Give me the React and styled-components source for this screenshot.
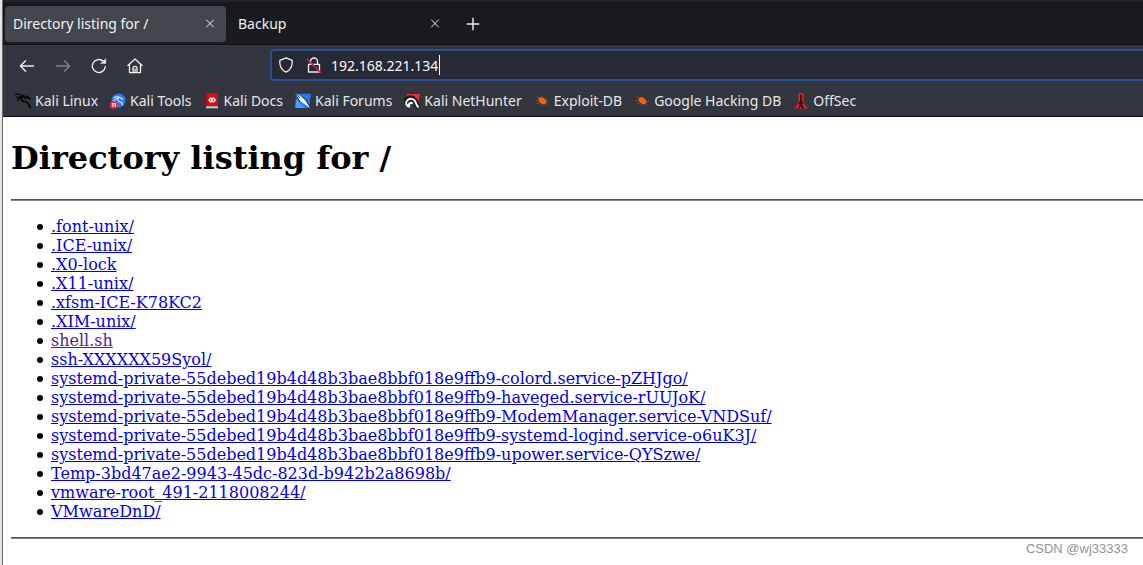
import React from 'react';
import styled, { createGlobalStyle } from 'styled-components';

const GlobalStyle = createGlobalStyle`
  * { box-sizing: border-box; }
  body { margin: 0; background: #fff; }
`;

const Window = styled.div`
  min-height: 100vh;
  background: #fff;
  border-left: 2px solid #e4e4e4;
`;

const Frame = styled.div`
  min-height: 100vh;
  border-left: 1px solid #6c6c6c;
`;

const Chrome = styled.header`
  background: #33363e;
  color: #f0f0f2;
  border-bottom: 1px solid #0b0b0e;
  font-family: 'Noto Sans', sans-serif;
  font-size: 14px;
  line-height: 20px;
`;

const TabBar = styled.div`
  display: flex;
  align-items: center;
  height: 45px;
  padding: 1px 2px 0;
  background: linear-gradient(#17181d, #1b1c20);
  border-top: 2px solid #21232d;
  border-bottom: 1px solid #121317;
`;

const Tab = styled.div`
  display: flex;
  align-items: center;
  justify-content: space-between;
  width: ${(p) => (p.$active ? 221 : 225)}px;
  height: 36px;
  padding: 0 8px 0 ${(p) => (p.$active ? 8 : 12)}px;
  border-radius: 4px;
  background: ${(p) => (p.$active ? '#43464d' : 'transparent')};
`;

const TabTitle = styled.span`
  white-space: nowrap;
`;

const IconButton = styled.button`
  display: flex;
  align-items: center;
  justify-content: center;
  width: ${(p) => p.$size || 16}px;
  height: ${(p) => p.$size || 16}px;
  padding: 0;
  border: 0;
  border-radius: 4px;
  background: none;
  color: inherit;
  opacity: ${(p) => (p.disabled ? 0.4 : 1)};
`;

const NewTab = styled(IconButton)`
  margin-left: 6px;
`;

const NavBar = styled.div`
  display: flex;
  align-items: center;
  height: 40px;
  padding-left: 8px;
`;

const NavButtons = styled.nav`
  display: flex;
  gap: 4px;
  flex: 0 0 auto;
  width: 259px;
  padding-top: 1px;
`;

const AddressBar = styled.label`
  display: flex;
  align-items: center;
  flex: 1;
  height: 32px;
  padding-left: 6px;
  gap: 12px;
  background: #272934;
  border: 2px solid #284f99;
  border-right: 0;
  border-radius: 4px 0 0 4px;
`;

const AddressText = styled.div`
  display: flex;
  align-items: center;
  flex: 1;
  margin-left: -3px;
`;

const Address = styled.input`
  flex: 0 0 auto;
  width: 108px;
  padding: 2px 0 0;
  border: 0;
  outline: 0;
  background: none;
  color: #fbfbfe;
  font: inherit;
`;

const Caret = styled.span`
  width: 1px;
  height: 20px;
  background: #fff;
`;

const Bookmarks = styled.nav`
  display: flex;
  align-items: center;
  gap: 12px;
  height: 31px;
  padding: 0 12px;
`;

const Bookmark = styled.a`
  display: flex;
  align-items: center;
  gap: 4px;
  color: #e6e6e8;
  text-decoration: none;
  white-space: nowrap;
`;

const Page = styled.main`
  padding: 0 0 0 8px;
  font-family: 'DejaVu Serif', serif;
  font-size: 16px;
  line-height: 19px;
  color: #000;
`;

const Heading = styled.h1`
  margin: 0;
  padding: 21px 0;
  font-size: 32px;
  line-height: 40px;
`;

const Rule = styled.hr`
  height: 2px;
  margin: 0;
  border: 0;
  border-top: 1px solid #555;
  background: #858585;
`;

const Listing = styled.ul`
  margin: 16px 0;
  padding-left: 26px;
  list-style: none;
`;

const Item = styled.li`
  display: flex;
  align-items: center;
  gap: 8px;

  &::before {
    content: '';
    width: 6px;
    height: 6px;
    border-radius: 50%;
    background: #000;
  }
`;

const Entry = styled.a`
  color: ${(p) => (p.$visited ? '#551a8b' : '#0000ee')};
  text-decoration: underline;
`;

const Watermark = styled.footer`
  padding: 1px 15px 0 0;
  text-align: right;
  font-family: 'Liberation Sans', sans-serif;
  font-size: 13px;
  line-height: 18px;
  color: #929292;
`;

const Line = ({ children, ...rest }) => (
  <svg width="16" height="16" viewBox="0 0 16 16" fill="none" stroke="currentColor" strokeWidth="1.3" strokeLinecap="round" strokeLinejoin="round" aria-hidden="true" {...rest}>
    {children}
  </svg>
);

const Close = () => <Line strokeWidth="1"><path d="M4.500 4l7 7M11.500 4l-7 7" /></Line>;
const Plus = () => <Line strokeWidth="1.400"><path d="M8 2.300v11.400M2.300 8h11.400" /></Line>;
const Back = () => <Line><path d="M14.500 8H1.500M6.600 2.800L1.400 8l5.200 5.200" /></Line>;
const Forward = () => <Line><path d="M1.500 8h13M9.400 2.800L14.600 8l-5.200 5.200" /></Line>;
const Reload = () => (
  <Line><path d="M14.300 8.500A6.500 6.500 0 1 1 12.300 3.300" /><path d="M9.800 5.500h5V1z" fill="currentColor" strokeWidth=".4" /></Line>
);
const Home = () => (
  <Line><path d="M.9 7.500L8 1l7.100 6.500M2.500 6.300v8.300h11V6.300M6 14.500v-4.200a2 2 0 0 1 4 0v4.200M8 11v3.500" /></Line>
);
const Shield = () => <Line><path d="M8 .9l6.200 2.500c.5 5.300-1.200 9.400-6.200 11.800C3 12.800 1.300 8.700 1.800 3.400z" /></Line>;
const Insecure = () => (
  <Line>
    <path d="M4.500 7.300V4.500a3.500 3.500 0 0 1 7 0v2.800M2.500 7.300h11V15h-11z" />
    <path d="M1.500 2.500L14.500 15.500" stroke="#d81f49" strokeWidth="1.600" />
  </Line>
);

const Favicon = ({ children }) => <svg width="16" height="16" viewBox="0 0 16 16" aria-hidden="true">{children}</svg>;

const KaliIcon = () => (
  <Favicon>
    <g fill="none" stroke="#08090b" strokeLinecap="round">
      <path d="M.5 1l4.500.3 4.500 1.900M1 4.400c2.500-.7 4.500-.8 7-.4M2.200 7.200l3.600-2.500" strokeWidth="1.300" />
      <path d="M7.500 3.500C5.500 6 6.500 8.500 9.500 8.600c3 .1 4.300 1.700 5.500 6" strokeWidth="1.900" />
      <path d="M9 3.700l3.600-.3 2.600 2.400-2.800-.5L9.500 5" strokeWidth="1.400" />
    </g>
  </Favicon>
);
const ToolsIcon = () => (
  <Favicon>
    <circle cx="8.500" cy="7.500" r="7" fill="#2c79f6" />
    <path d="M3.500 4.700c2.500-1.200 5-1 7.500 0M3.300 8c1.500-2 3-2.600 5.200-3-1.400 2-.5 3.300 1.500 3.800 1.800.4 2.500 1.800 2.500 3.200M10 4.700l3.200 1.900" fill="none" stroke="#d8e7ff" strokeWidth="1.200" />
    <circle cx="3.800" cy="12" r="3.800" fill="#ed2f3d" />
    <path d="M1.900 10.500h1v3.200M4.200 10.500h1v3.200" fill="none" stroke="#fff" strokeWidth="1.100" />
  </Favicon>
);
const DocsIcon = () => (
  <Favicon>
    <path d="M2 .3h12v13H2z" fill="#d80e15" />
    <path d="M2 .3h1.500v13H2z" fill="#b70b12" />
    <path d="M2 13.300h12v2H2z" fill="#c9ced6" />
    <path d="M7.200 4.700L5 7l2 2 1.300-1.200-.7-2.100L9.300 5l2 2-2.200 2.300" fill="none" stroke="#fff" strokeWidth="1.300" />
  </Favicon>
);
const ForumsIcon = () => (
  <Favicon>
    <path d="M2 .8h14L14 15H.5z" fill="#2378f7" />
    <path d="M.8 6l9 9H.3z" fill="#43a2ff" />
    <path d="M0 0l7 4.300 3.500 3.500 5.200 7.700-6-4.300L5 8z" fill="#f5f6f8" />
    <path d="M.5.5L5 5M7.500 3.500L11 7l4.500 8M1.500 4L5 8.500" fill="none" stroke="#28303a" />
  </Favicon>
);
const NetHunterIcon = () => (
  <Favicon>
    <path d="M2 1h14l-3 13z" fill="#f02b3c" />
    <path d="M1.800 10.500C.8 6.500 4.800 4 8.200 5.200c3.800 1.300 3.300 5.500 6.300 9.300" fill="none" stroke="#17191e" strokeWidth="5" />
    <path d="M5.800 13.800C2 13 1 9.600 3.300 7.300c2.500-2.500 6.700-1.800 8 1.300.9 2.200 1.200 3.900 3.200 5.900M5.500 13.500c-1.800-2.300.8-4.500 3.300-3" fill="none" stroke="#fff" strokeWidth="1.900" />
  </Favicon>
);
const BugIcon = () => (
  <Favicon>
    <path d="M5 4.800c3-1.300 6.500.5 7.500 3.700.1 1.900-.9 2.800-2.600 2.800C6.800 11.300 3.500 8.300 5 4.800z" fill="#ee6410" />
    <path d="M5 5L2.500 3.500M4.500 7.500L1.300 7.300M6 9.800l-3 .7M8 11l-.8 2M8 4.500l1-1.800M11 6.300l1.700-1.600M12.500 8.200l2.500.2M12 10.800l1.700 1.500" stroke="#984821" strokeWidth=".9" />
  </Favicon>
);
const OffSecIcon = () => (
  <Favicon>
    <path d="M5.500 0h5v10l4 5.500h-13l4-5.500z" fill="#e2222b" />
    <path d="M7.200 1.500h1.600v6.300l1.500 2-1 2.200 2 3.500H9.500L8 13.200l-1.500 2.300H4.700l2-3.500-1-2.200 1.500-2z" fill="#3a070c" />
  </Favicon>
);

const bookmarks = [
  ['Kali Linux', KaliIcon],
  ['Kali Tools', ToolsIcon],
  ['Kali Docs', DocsIcon],
  ['Kali Forums', ForumsIcon],
  ['Kali NetHunter', NetHunterIcon],
  ['Exploit-DB', BugIcon],
  ['Google Hacking DB', BugIcon],
  ['OffSec', OffSecIcon],
];

const entries = [
  '.font-unix/',
  '.ICE-unix/',
  '.X0-lock',
  '.X11-unix/',
  '.xfsm-ICE-K78KC2',
  '.XIM-unix/',
  'shell.sh',
  'ssh-XXXXXX59Syol/',
  'systemd-private-55debed19b4d48b3bae8bbf018e9ffb9-colord.service-pZHJgo/',
  'systemd-private-55debed19b4d48b3bae8bbf018e9ffb9-haveged.service-rUUJoK/',
  'systemd-private-55debed19b4d48b3bae8bbf018e9ffb9-ModemManager.service-VNDSuf/',
  'systemd-private-55debed19b4d48b3bae8bbf018e9ffb9-systemd-logind.service-o6uK3J/',
  'systemd-private-55debed19b4d48b3bae8bbf018e9ffb9-upower.service-QYSzwe/',
  'Temp-3bd47ae2-9943-45dc-823d-b942b2a8698b/',
  'vmware-root_491-2118008244/',
  'VMwareDnD/',
];

export default function App() {
  return (
    <Window>
      <GlobalStyle />
      <Frame>
        <Chrome>
          <TabBar>
            <Tab $active>
              <TabTitle>Directory listing for /</TabTitle>
              <IconButton aria-label="Close tab"><Close /></IconButton>
            </Tab>
            <Tab>
              <TabTitle>Backup</TabTitle>
              <IconButton aria-label="Close tab"><Close /></IconButton>
            </Tab>
            <NewTab $size={32} aria-label="New tab"><Plus /></NewTab>
          </TabBar>
          <NavBar>
            <NavButtons>
              <IconButton $size={32} aria-label="Back"><Back /></IconButton>
              <IconButton $size={32} aria-label="Forward" disabled><Forward /></IconButton>
              <IconButton $size={32} aria-label="Reload"><Reload /></IconButton>
              <IconButton $size={32} aria-label="Home"><Home /></IconButton>
            </NavButtons>
            <AddressBar>
              <Shield />
              <Insecure />
              <AddressText>
                <Address aria-label="Address" defaultValue="192.168.221.134" />
                <Caret />
              </AddressText>
            </AddressBar>
          </NavBar>
          <Bookmarks>
            {bookmarks.map(([name, Icon]) => (
              <Bookmark key={name} href="#"><Icon />{name}</Bookmark>
            ))}
          </Bookmarks>
        </Chrome>
        <Page>
          <Heading>Directory listing for /</Heading>
          <Rule />
          <Listing>
            {entries.map((name) => (
              <Item key={name}><Entry href="#" $visited={name === 'shell.sh'}>{name}</Entry></Item>
            ))}
          </Listing>
          <Rule />
          <Watermark>CSDN @wj33333</Watermark>
        </Page>
      </Frame>
    </Window>
  );
}
